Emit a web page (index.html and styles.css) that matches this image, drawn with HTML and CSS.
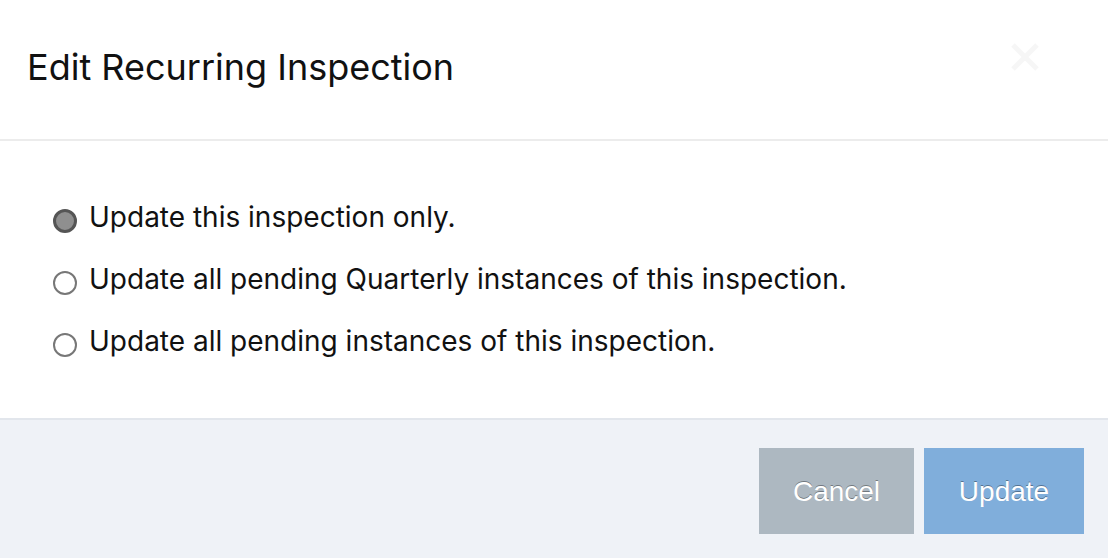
FILE: index.html
```html
<!DOCTYPE html>
<html>
<head>
<meta charset="utf-8">
<link rel="stylesheet" href="styles.css">
</head>
<body>
<div class="modal">
  <div class="modal-header">
    <h3 class="title">Edit Recurring Inspection</h3>
    <span class="close" aria-label="Close">
      <svg width="30" height="30" viewBox="0 0 30 30"><path d="M3 3 L27 27 M27 3 L3 27" stroke="#f6f6f6" stroke-width="5" stroke-linecap="butt"/></svg>
    </span>
  </div>
  <div class="modal-body">
    <label class="option"><input type="radio" name="scope" class="radio" checked><span>Update this inspection only.</span></label>
    <label class="option"><input type="radio" name="scope" class="radio"><span>Update all pending Quarterly instances of this inspection.</span></label>
    <label class="option"><input type="radio" name="scope" class="radio"><span>Update all pending instances of this inspection.</span></label>
  </div>
  <div class="modal-footer">
    <button class="btn btn-cancel">Cancel</button>
    <button class="btn btn-update">Update</button>
  </div>
</div>
</body>
</html>
```
FILE: styles.css
```css
html, body {
  margin: 0;
  padding: 0;
  background: #fff;
}
body {
  font-family: Inter, "Noto Sans", sans-serif;
  color: #111;
}
.modal {
  width: 1108px;
  height: 558px;
  display: flex;
  flex-direction: column;
  overflow: hidden;
}
.modal-header {
  height: 141px;
  border-bottom: 2px solid #ececec;
  display: flex;
  align-items: center;
  justify-content: space-between;
  padding: 0 68px 0 27px;
  box-sizing: border-box;
  flex: none;
}
.title {
  margin: 0;
  font-size: 36px;
  font-weight: 400;
  color: #111;
  margin-top: -5px;
}
.close {
  display: flex;
  margin-top: -26px;
}
.modal-body {
  padding: 45px 0 46px 53px;
  display: flex;
  flex-direction: column;
  flex: none;
}
.option {
  height: 62px;
  display: flex;
  align-items: center;
  font-size: 28px;
  color: #111;
}
.radio {
  appearance: none;
  -webkit-appearance: none;
  width: 24px;
  height: 24px;
  margin: 8px 12px 0 0;
  border: 2px solid #777;
  border-radius: 50%;
  box-sizing: border-box;
  background: #fff;
  flex: none;
}
.radio:checked {
  background: #8f8f8f;
  border: 3px solid #555;
}
.modal-footer {
  flex: 1;
  background: #eff2f7;
  border-top: 2px solid #e2e6ec;
  display: flex;
  justify-content: flex-end;
  align-items: flex-start;
  padding: 28px 24px 0 0;
  gap: 10px;
}
.btn {
  height: 86px;
  border: none;
  border-radius: 0;
  font-family: "Liberation Sans", Arial, sans-serif;
  font-size: 28px;
  color: #fff;
  text-shadow: 0 -1px 0 rgba(0, 0, 0, 0.35);
  padding: 2px 0 0;
}
.btn-cancel {
  width: 155px;
  background: #adb8c1;
}
.btn-update {
  width: 160px;
  background: #80aedb;
}
```
